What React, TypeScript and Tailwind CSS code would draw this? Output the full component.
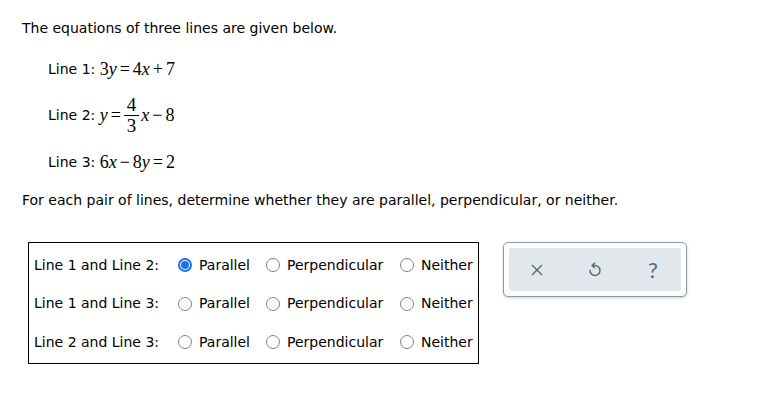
import React from 'react';

const rows = [
  { label: 'Line 1 and Line 2:', picked: 0 },
  { label: 'Line 1 and Line 3:', picked: -1 },
  { label: 'Line 2 and Line 3:', picked: -1 },
];
const options = ['Parallel', 'Perpendicular', 'Neither'];

const mathFont = { fontFamily: '"Liberation Serif", "Times New Roman", serif' };

function Radio({ on }: { on: boolean }) {
  return on ? (
    <span className="inline-flex h-[14px] w-[14px] items-center justify-center rounded-full bg-[#1a73e8]">
      <span className="flex h-[10px] w-[10px] items-center justify-center rounded-full bg-white">
        <span className="h-[8px] w-[8px] rounded-full bg-[#1a73e8]" />
      </span>
    </span>
  ) : (
    <span className="inline-block h-[14px] w-[14px] rounded-full border border-[#808080] bg-white" />
  );
}

function Op({ c }: { c: string }) {
  return <span className="mx-[3px]">{c}</span>;
}

export default function App() {
  return (
    <div className="min-h-screen bg-white text-[14px] text-black font-['DejaVu_Sans',Verdana,sans-serif]">
      <div className="px-[22px] pt-[19px]">
        <p className="leading-[18px]">The equations of three lines are given below.</p>

        <div className="ml-[26px] mt-[21px] flex items-center leading-[22px]">
          <span>Line 1:&nbsp;</span>
          <span className="text-[18px]" style={mathFont}>
            3<i>y</i><Op c="=" />4<i>x</i><Op c="+" />7
          </span>
        </div>

        <div className="ml-[26px] mt-[15px] flex items-center">
          <span>Line 2:&nbsp;</span>
          <span className="flex items-center text-[18px]" style={mathFont}>
            <i>y</i><Op c="=" />
            <span className="inline-flex flex-col items-center text-[19px] leading-[20px]">
              <span className="border-b border-black px-[3px]">4</span>
              <span>3</span>
            </span>
            <i className="ml-[2px]">x</i><Op c="−" />8
          </span>
        </div>

        <div className="ml-[26px] mt-[15px] flex items-center leading-[22px]">
          <span>Line 3:&nbsp;</span>
          <span className="text-[18px]" style={mathFont}>
            6<i>x</i><Op c="−" />8<i>y</i><Op c="=" />2
          </span>
        </div>

        <p className="mt-[18px] leading-[18px]">
          For each pair of lines, determine whether they are parallel, perpendicular, or neither.
        </p>

        <div className="mt-[33px] flex items-start">
          <div className="ml-[6px] w-[451px] border border-black px-[5px] pt-[3px] pb-[1px]">
            {rows.map((r, i) => (
              <div key={i} className="flex h-[38.5px] items-center">
                <span className="w-[144px]">{r.label}</span>
                {options.map((o, j) => (
                  <label
                    key={o}
                    className={`flex items-center ${j === 0 ? 'w-[88px]' : j === 1 ? 'w-[134px]' : ''}`}
                  >
                    <Radio on={r.picked === j} />
                    <span className="ml-[7px]">{o}</span>
                  </label>
                ))}
              </div>
            ))}
          </div>

          <div className="ml-[24px] rounded-[5px] border border-[#8c9ba3] bg-white p-[5px] shadow-[0_1px_3px_rgba(0,0,0,0.2)]">
            <div className="flex h-[43px] w-[172px] items-center justify-between rounded-[3px] bg-[#e1e7ea] px-[21px] text-[#4f6c7a]">
              <svg width="14" height="14" viewBox="0 0 14 14" fill="none" stroke="currentColor" strokeWidth="1.4">
                <path d="M2 2 L12 12 M12 2 L2 12" />
              </svg>
              <svg width="14" height="17" viewBox="0 0 14 17" fill="none" stroke="currentColor" strokeWidth="1.5" strokeLinecap="round" strokeLinejoin="round">
                <path d="M4.3 4.5 H7 A5 5 0 1 1 2 9.5" />
                <path d="M6.5 2.2 L4.3 4.5 L6.5 6.8" />
              </svg>
              <span className="w-[14px] text-center text-[22px] leading-none font-['Lato',sans-serif]">?</span>
            </div>
          </div>
        </div>
      </div>
    </div>
  );
}
